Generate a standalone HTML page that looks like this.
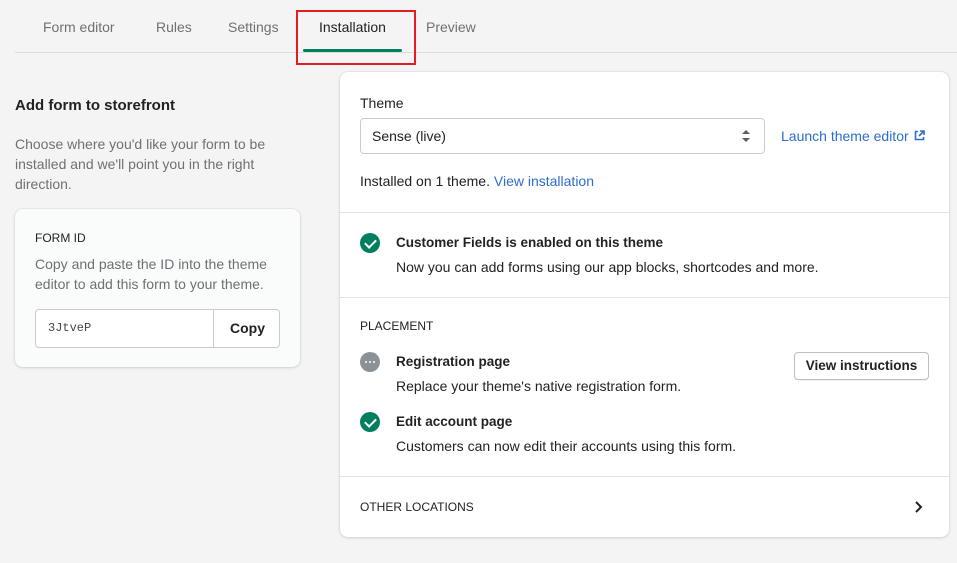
<!DOCTYPE html>
<html><head><meta charset="utf-8"><style>
*{box-sizing:border-box;margin:0;padding:0}
body{width:957px;height:563px;background:#f4f4f4;font-family:"Liberation Sans",sans-serif;color:#202223;position:relative;overflow:hidden;font-size:14px}
.a{position:absolute;white-space:nowrap}
.tab{color:#6d7175;font-size:14px;top:19px}
.sub{color:#6d7175}
.card{position:absolute;left:340px;top:72px;width:609px;height:465px;background:#fff;border-radius:8px;box-shadow:0 0 0 1px rgba(63,63,68,.05),0 1px 3px rgba(63,63,68,.15)}
.hr{position:absolute;left:0;width:100%;height:1px;background:#e1e3e5}
.chk{position:absolute;width:20px;height:20px;border-radius:50%;background:#007f5f}
.chk:after{content:"";position:absolute;left:7px;top:4px;width:5px;height:9px;border:solid #fff;border-width:0 2px 2px 0;transform:rotate(45deg)}
.b{font-weight:bold;font-size:13.5px}
.d{position:absolute;top:9px;width:2px;height:2px;background:#fff;border-radius:1px}
</style></head><body>
<div class="a tab" style="left:43px">Form editor</div>
<div class="a tab" style="left:156px">Rules</div>
<div class="a tab" style="left:228px">Settings</div>
<div class="a tab" style="left:319px;color:#202223">Installation</div>
<div class="a tab" style="left:426px">Preview</div>
<div class="a" style="left:15px;top:52px;width:942px;height:1px;background:#dcdcdc"></div>
<div class="a" style="left:303px;top:49px;width:99px;height:3px;background:#008060;border-radius:2px"></div>
<div class="a" style="left:296px;top:10px;width:120px;height:55px;border:2px solid #e31b23"></div>

<div class="a b" style="left:15px;top:97px;font-size:15px">Add form to storefront</div>
<div class="a sub" style="left:15px;top:134px;line-height:20px;font-size:14px">Choose where you'd like your form to be<br>installed and we'll point you in the right<br>direction.</div>
<div class="a" style="left:15px;top:209px;width:285px;height:158px;background:#fafbfb;border-radius:8px;box-shadow:0 0 0 1px rgba(63,63,68,.05),0 1px 3px rgba(63,63,68,.15)">
 <div class="a" style="left:20px;top:22px;font-size:12px">FORM ID</div>
 <div class="a sub" style="left:20px;top:45px;line-height:20px;font-size:14px">Copy and paste the ID into the theme<br>editor to add this form to your theme.</div>
 <div class="a" style="left:20px;top:100px;width:245px;height:39px;border:1px solid #c9cccf;border-radius:4px;background:#fff">
  <div class="a" style="left:12px;top:11px;font-family:'Liberation Mono',monospace;font-size:12px;color:#444">3JtveP</div>
  <div class="a" style="left:177px;top:0;width:1px;height:37px;background:#c9cccf"></div>
  <div class="a b" style="left:194px;top:10px;font-size:14px">Copy</div>
 </div>
</div>

<div class="card">
 <div class="a" style="left:20px;top:23px">Theme</div>
 <div class="a" style="left:20px;top:46px;width:405px;height:36px;border:1px solid #c9cccf;border-radius:4px">
  <div class="a" style="left:11px;top:9px">Sense (live)</div>
  <svg class="a" style="left:380px;top:10px" width="10" height="14" viewBox="0 0 10 14"><path d="M1 5l4-4 4 4zM1 9l4 4 4-4z" fill="#5c5f62"/></svg>
 </div>
 <div class="a" style="left:441px;top:56px;color:#2c6ecb">Launch theme editor</div>
 <svg class="a" style="left:574px;top:58px" width="11" height="11" viewBox="0 0 11 11"><path d="M4 1.5H1.5v8h8V7M6 1h4v4M10 1L5 6" stroke="#2c6ecb" stroke-width="1.6" fill="none"/></svg>
 <div class="a" style="left:20px;top:101px">Installed on 1 theme. <span style="color:#2c6ecb">View installation</span></div>
 <div class="hr" style="top:140px"></div>
 <div class="chk" style="left:20px;top:161px"></div>
 <div class="a b" style="left:56px;top:163px">Customer Fields is enabled on this theme</div>
 <div class="a" style="left:56px;top:187px;font-size:14px">Now you can add forms using our app blocks, shortcodes and more.</div>
 <div class="hr" style="top:225px"></div>
 <div class="a" style="left:20px;top:247px;font-size:12px">PLACEMENT</div>
 <div class="a" style="left:20px;top:280px;width:20px;height:20px;border-radius:50%;background:#8c9196"><div class="d" style="left:5px"></div><div class="d" style="left:9px"></div><div class="d" style="left:13px"></div></div>
 <div class="a b" style="left:56px;top:282px">Registration page</div>
 <div class="a" style="left:56px;top:306px;font-size:14px">Replace your theme's native registration form.</div>
 <div class="a b" style="left:454px;top:280px;width:135px;height:28px;border:1px solid #babfc3;border-radius:4px;box-shadow:0 1px 0 rgba(0,0,0,.05);text-align:center;line-height:26px">View instructions</div>
 <div class="chk" style="left:20px;top:340px"></div>
 <div class="a b" style="left:56px;top:342px">Edit account page</div>
 <div class="a" style="left:56px;top:366px;font-size:14px">Customers can now edit their accounts using this form.</div>
 <div class="hr" style="top:404px"></div>
 <div class="a" style="left:20px;top:428px;font-size:12px">OTHER LOCATIONS</div>
 <svg class="a" style="left:574px;top:428px" width="10" height="14" viewBox="0 0 10 14"><path d="M2 2l5 5-5 5" stroke="#202223" stroke-width="2" fill="none"/></svg>
</div>
</body></html>
